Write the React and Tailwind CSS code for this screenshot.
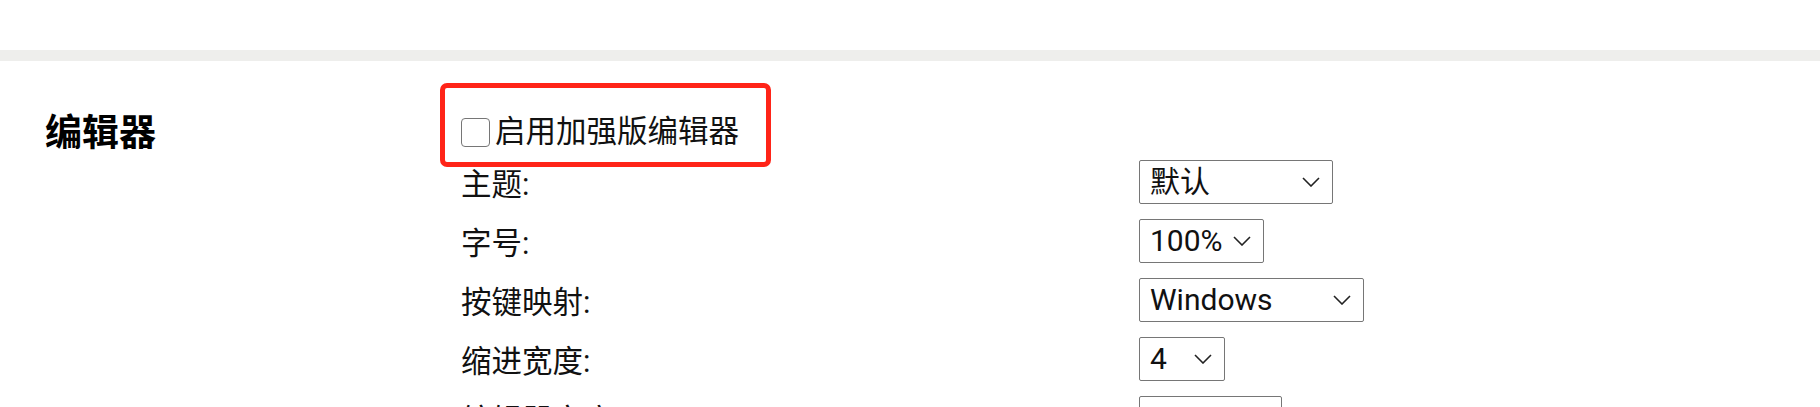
import React from "react";

const rows = [
  { label: "主题:", value: "默认", width: "w-[194px]" },
  { label: "字号:", value: "100%", width: "w-[125px]" },
  { label: "按键映射:", value: "Windows", width: "w-[225px]" },
  { label: "缩进宽度:", value: "4", width: "w-[86px]" },
  { label: "编辑器宽度:", value: "", width: "w-[143px]" },
];

function Chevron() {
  return (
    <svg width="18" height="10" viewBox="0 0 18 10" className="shrink-0">
      <path d="M1 1l8 8 8-8" fill="none" stroke="#222" strokeWidth="1.6" />
    </svg>
  );
}

function FakeSelect({ value, width }) {
  return (
    <div
      className={`${width} h-[44px] flex items-center justify-between pl-[10px] pr-[12px] border border-[#767676] rounded-[2px] bg-white text-[30px] leading-none text-[#111]`}
    >
      <span>{value}</span>
      <Chevron />
    </div>
  );
}

export default function App() {
  return (
    <div
      className="w-full h-[407px] overflow-hidden bg-white text-black"
      style={{ fontFamily: 'Roboto, "Noto Sans CJK SC", sans-serif' }}
    >
      <div className="h-[50px]" />
      <div className="h-[11px] bg-[#eeeeec]" />
      <div className="flex">
        <div className="w-[461px] shrink-0 pl-[45px] pt-[47px]">
          <h2 className="text-[37px] leading-[44px] font-bold font-['Noto_Sans_CJK_SC',sans-serif]">
            编辑器
          </h2>
        </div>
        <div className="flex flex-col pt-[49px]">
          <div className="relative h-[44px] flex items-center">
            <div className="absolute left-[-21px] top-[-27px] w-[331px] h-[84px] border-[5px] border-[#ff2418] rounded-[7px] pointer-events-none" />
            <span className="w-[29px] h-[29px] shrink-0 border border-[#767676] rounded-[4px] bg-white" />
            <span className="ml-[5px] text-[30.5px] leading-none text-[#111]">启用加强版编辑器</span>
          </div>
          <div className="flex flex-col gap-[15px] mt-[6px]">
            {rows.map((row) => (
              <div key={row.label} className="flex items-center">
                <span className="w-[678px] shrink-0 mt-[7px] text-[30.5px] leading-none text-[#111]">{row.label}</span>
                <FakeSelect value={row.value} width={row.width} />
              </div>
            ))}
          </div>
        </div>
      </div>
    </div>
  );
}
